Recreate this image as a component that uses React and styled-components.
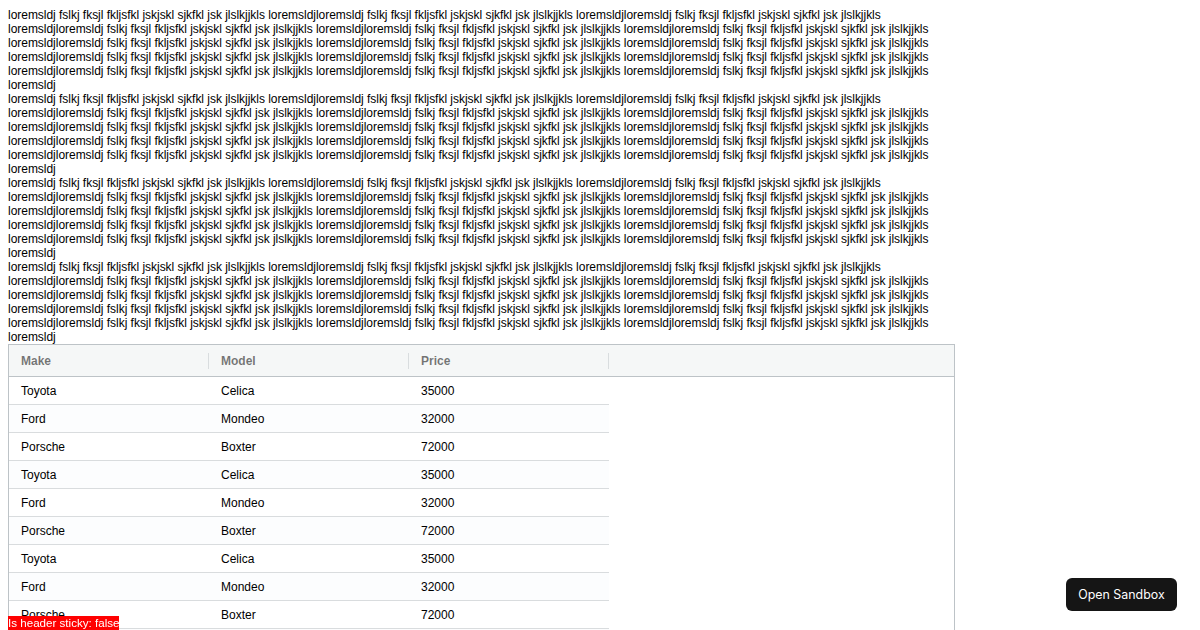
import React from 'react';
import styled, { createGlobalStyle } from 'styled-components';

const GlobalStyle = createGlobalStyle`
  body {
    margin: 8px;
    font-family: "Liberation Sans", Arial, sans-serif;
    font-size: 12px;
    line-height: 14px;
    color: #000;
  }
`

const Page = styled.div`
  width: 947px;
`

const Filler = styled.div`
  word-wrap: break-word;
  letter-spacing: -0.03px;
`

const Grid = styled.div`
  border: 1px solid #bdc3c7;
  height: 500px;
  font-family: "Liberation Sans", Arial, sans-serif;
  font-size: 12px;
  color: #000;
  overflow: hidden;
  box-sizing: border-box;
`

const HeaderRow = styled.div`
  display: flex;
  height: 31px;
  background: #f5f7f7;
  border-bottom: 1px solid #bdc3c7;
`

const HeaderCell = styled.div`
  position: relative;
  width: 200px;
  box-sizing: border-box;
  padding-left: 12px;
  display: flex;
  align-items: center;
  font-weight: bold;
  color: rgba(0, 0, 0, 0.54);
  &::after {
    content: '';
    position: absolute;
    right: 0;
    top: 8px;
    height: 16px;
    width: 1px;
    background: rgba(189, 195, 199, 0.5);
  }
`

const Row = styled.div`
  display: flex;
  width: 600px;
  height: 27px;
  border-bottom: 1px solid #d9dcde;
  background: ${p => (p.$odd ? '#fcfdfe' : '#fff')};
`

const Cell = styled.div`
  width: 200px;
  box-sizing: border-box;
  padding-left: 12px;
  display: flex;
  align-items: center;
`

const StickyLabel = styled.div`
  position: fixed;
  left: 8px;
  bottom: 0;
  background: red;
  color: #fff;
  font-size: 11.6px;
  line-height: 14px;
`

const SandboxButton = styled.button`
  position: fixed;
  right: 23px;
  bottom: 19px;
  width: 111px;
  height: 33px;
  border: none;
  border-radius: 6px;
  background: #151515;
  color: #fff;
  font-family: Inter, "Liberation Sans", sans-serif;
  font-size: 12.4px;
  cursor: pointer;
`

const unit = 'loremsldj fslkj fksjl fkljsfkl jskjskl sjkfkl jsk jlslkjjkls loremsldj';
const block = Array(15).fill(unit).join('');

const cars = [
  { make: 'Toyota', model: 'Celica', price: 35000 },
  { make: 'Ford', model: 'Mondeo', price: 32000 },
  { make: 'Porsche', model: 'Boxter', price: 72000 },
];

const rows = Array(5).fill(cars).flat();

const App = () => {
  return (
    <>
      <GlobalStyle />
      <Page>
        {[0, 1, 2, 3].map(i => (
          <Filler key={i}>{block}</Filler>
        ))}
        <Grid>
          <HeaderRow>
            <HeaderCell>Make</HeaderCell>
            <HeaderCell>Model</HeaderCell>
            <HeaderCell>Price</HeaderCell>
          </HeaderRow>
          {rows.map((car, index) => (
            <Row key={index} $odd={index % 2 === 1}>
              <Cell>{car.make}</Cell>
              <Cell>{car.model}</Cell>
              <Cell>{car.price}</Cell>
            </Row>
          ))}
        </Grid>
      </Page>
      <StickyLabel>Is header sticky: false</StickyLabel>
      <SandboxButton>Open Sandbox</SandboxButton>
    </>
  )
}

export default App;
